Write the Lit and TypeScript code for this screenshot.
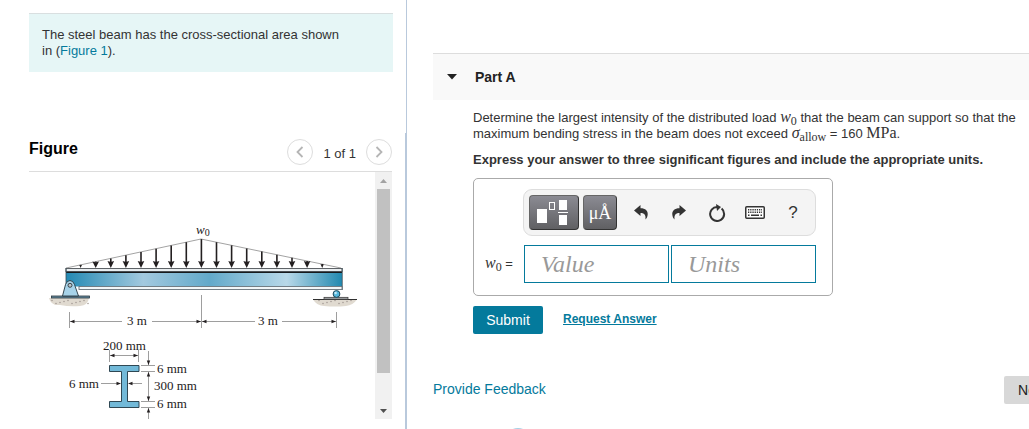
import { LitElement, html, svg, css } from "lit";
import { customElement } from "lit/decorators.js";

const BEAM_LEFT = 66;
const BEAM_MID = 201;
const BEAM_RIGHT = 341;
const LOAD_BASE = 268;
const LOAD_PEAK = 239;

@customElement("beam-figure")
class BeamFigure extends LitElement {
  static styles = css`
    :host { display: block; }
    .drawing { display: block; width: 346px; height: 247px; }
    .label { font: 13px "Liberation Serif", serif; fill: #1c1a1b; }
    .symbol { font-style: italic; }
    .small { font-size: 10px; font-style: normal; }
  `;

  loadTop(x: number) {
    return x <= BEAM_MID
      ? LOAD_BASE - ((x - BEAM_LEFT) / (BEAM_MID - BEAM_LEFT)) * (LOAD_BASE - LOAD_PEAK)
      : LOAD_BASE - ((BEAM_RIGHT - x) / (BEAM_RIGHT - BEAM_MID)) * (LOAD_BASE - LOAD_PEAK);
  }

  loadArrow(x: number) {
    const top = this.loadTop(x);
    const height = LOAD_BASE - top;
    const head = Math.min(7, height);
    const half = head > 5 ? 3.3 : head * 0.45;
    const tip = LOAD_BASE;
    return svg`
      <path d="M${x} ${top}V${tip - head + 1}" stroke="#231f20" stroke-width="1.6" />
      <path d="M${x - half} ${tip - head}Q${x} ${tip - head + 1.4} ${x + half} ${tip - head}L${x} ${tip}Z" fill="#231f20" />`;
  }

  arrowHead(x: number, y: number, angle: number) {
    return svg`<path d="M0 0L-4.5 -1.7V1.7Z" fill="#231f20" transform="translate(${x} ${y}) rotate(${angle})" />`;
  }

  ground(path: string, x: number, width: number) {
    const specks = Array.from({ length: Math.floor(width / 4) }, (_, i) => svg`
      <circle cx=${x + 3 + i * 4} cy=${300.5 + ((i * 3) % 4)} r="0.8" fill="#a59d98" />`);
    return svg`<path d=${path} fill="#e0dad0" />${specks}`;
  }

  render() {
    const arrows = Array.from({ length: 17 }, (_, i) => this.loadArrow(80.6 + i * 15.1));
    return html`
      <svg class="drawing" viewBox="29 172 346 247" role="img" aria-label="Simply supported steel beam with a triangular load and its I-shaped cross section">
        <defs>
          <linearGradient id="steel">
            <stop offset="0" stop-color="#2389b3" />
            <stop offset="0.28" stop-color="#a2c9df" />
            <stop offset="0.52" stop-color="#62a9ca" />
            <stop offset="0.8" stop-color="#b8d8e8" />
            <stop offset="1" stop-color="#2189b0" />
          </linearGradient>
        </defs>

        <path d="M66 268L201 239L341 268" fill="none" stroke="#8b8b8b" stroke-width="0.8" />
        ${arrows}

        <rect x="66" y="268.5" width="276" height="3" fill="#e9eef1" stroke="#5d6266" />
        <rect x="66" y="272" width="276" height="14.5" fill="url(#steel)" />
        <path d="M66 272.3H342" stroke="#161a1d" stroke-width="1.3" />
        <path d="M66 268V287M342.3 268V290" stroke="#394c56" stroke-width="0.8" />
        <rect x="79" y="286.5" width="263" height="3" fill="#f2f7f9" stroke="#67727a" stroke-width="0.9" />

        ${this.ground("M49 298H89Q88 305 80 306Q70 307 60 305Q51 306 49 298Z", 49, 40)}
        <rect x="51.5" y="296" width="38" height="2" fill="#668da0" stroke="#29363d" stroke-width="0.8" />
        <path d="M62.5 296L65.5 284.5Q67 280.5 70 280.5Q73 280.5 74.5 284.5L78.5 296Z" fill="#a7d3e9" stroke="#26373f" stroke-width="0.9" />
        <circle cx="70" cy="285.3" r="2" fill="#bcc5ca" stroke="#2b3439" stroke-width="0.9" />

        ${this.ground("M313 299.5H357Q353 305 346 306Q335 307 324 306Q317 306 313 299.5Z", 316, 38)}
        <path d="M313 299.5H357" stroke="#303030" stroke-width="1" />
        <rect x="324" y="297.3" width="24" height="2" fill="#9c9fa1" stroke="#333" stroke-width="0.7" />
        <circle cx="336.5" cy="294" r="3.4" fill="#55b7dc" stroke="#1d4555" />
        <circle cx="335.6" cy="293" r="1.2" fill="#c8ebf7" />

        <path d="M69.5 312V328M201.5 295V328M336.5 312V328M70 321.5H122M152 321.5H201M202 321.5H255M282 321.5H336" stroke="#858585" stroke-width="0.8" />
        ${this.arrowHead(70, 321.5, 180)}${this.arrowHead(201, 321.5, 0)}
        ${this.arrowHead(202, 321.5, 180)}${this.arrowHead(336, 321.5, 0)}
        <text class="label symbol" x="196" y="234">w<tspan class="small" dy="2">0</tspan></text>
        <text class="label" x="127" y="325">3 m</text>
        <text class="label" x="258" y="325">3 m</text>

        <path d="M109.5 365.5H139V371.5H127.5V401.5H139V407.5H109.5V401.5H121.5V371.5H109.5Z" fill="#72b9d8" stroke="#1f3743" stroke-width="0.9" />
        <path d="M109.5 350V362M138.5 350V362M110 355.5H138M141 365.5H155M141 371.5H155M141 401.5H155M141 407.5H155M101 383.5H120M129 383.5H142M148.5 351V365M148.5 372V401M148.5 408V419" stroke="#858585" stroke-width="0.8" />
        ${this.arrowHead(110, 355.5, 180)}${this.arrowHead(138, 355.5, 0)}
        ${this.arrowHead(121, 383.5, 0)}${this.arrowHead(128, 383.5, 180)}
        ${this.arrowHead(148.5, 365, 90)}${this.arrowHead(148.5, 372, -90)}
        ${this.arrowHead(148.5, 401, 90)}${this.arrowHead(148.5, 408, -90)}
        <text class="label" x="103" y="350">200 mm</text>
        <text class="label" x="157" y="373">6 mm</text>
        <text class="label" x="154" y="390">300 mm</text>
        <text class="label" x="157" y="408">6 mm</text>
        <text class="label" x="69" y="388">6 mm</text>
      </svg>`;
  }
}

@customElement("app-root")
class AppRoot extends LitElement {
  static styles = css`
    :host {
      display: block;
      font: 13px/16px "Liberation Sans", Arial, sans-serif;
      color: #333;
      background: #fff;
    }
    *, *::before { box-sizing: border-box; }
    button { font: inherit; cursor: pointer; margin: 0; padding: 0; border: 0; background: none; }
    h2, p { margin: 0; }
    a { color: #047a9c; text-decoration: none; }

    .page { display: grid; grid-template-columns: 407px minmax(0, 1fr); height: 100vh; overflow: hidden; }
    .left { display: flex; flex-direction: column; }
    .intro { height: 133px; padding: 13px 13px 0 29px; border-right: 1px solid #b9c9dc; }
    .problem { padding: 13px 48px 13px 13px; border-top: 1px solid #d9dfe0; background: #e6f6f6; }
    .figure { flex: 1; padding: 6px 13px 0 29px; border-right: 2px solid #b9c9dc; }
    .figure-head { display: flex; align-items: center; justify-content: space-between; height: 33px; padding-bottom: 7px; border-bottom: 1px solid #ddd; }
    .figure-title { font-size: 16px; line-height: 18px; color: #000; padding-bottom: 6px; }
    .pager { display: flex; align-items: center; gap: 10px; }
    .pager-text { padding-top: 4px; }
    .round { display: grid; place-items: center; width: 26px; height: 26px; border: 1px solid #ddd; border-radius: 50%; }
    .viewer { display: flex; justify-content: space-between; height: 247px; overflow: hidden; }
    .scrollbar { display: flex; flex-direction: column; align-items: center; justify-content: space-between; width: 17px; background: #f1f1f1; }
    .scroll-arrow { display: grid; place-items: center; width: 17px; height: 17px; }
    .thumb { width: 13px; flex: 1; margin-bottom: 29px; background: #c1c1c1; }

    .right { padding: 53px 0 0 26px; min-width: 0; }
    .part-head { display: flex; align-items: center; gap: 18px; width: 100%; height: 47px; padding-left: 14px; border-top: 1px solid #ddd; background: #f9f9f9; }
    .part-title { font-size: 14px; color: #222; }
    .part-body { padding: 10px 0 0 40px; }
    .instruction { padding-top: 10px; font-weight: bold; }
    .math { font-family: "Liberation Serif", serif; font-size: 16px; line-height: 12px; }
    .math i { font-style: italic; }
    .sub { font-size: 12px; position: relative; top: 3px; }
    .answer { width: 360px; margin-top: 10px; padding: 10px 16px 12px 11px; border: 1px solid #aaa; border-radius: 5px; }
    .toolbar { display: flex; align-items: center; height: 47px; margin-left: 38px; padding: 0 5px; border: 1px solid #ddd; border-radius: 9px; background: #f4f4f4; }
    .dark { display: grid; place-items: center; height: 35px; border: 1px solid #333; border-top-color: #666; border-left-color: #666; border-radius: 4px; background: linear-gradient(#8b8b93, #606063); color: #fff; }
    .templates { width: 50px; }
    .symbols { width: 34px; margin-left: 4px; font: 18px/20px "Liberation Serif", serif; }
    .tools { display: flex; flex: 1; justify-content: space-between; padding: 0 5px 0 12px; }
    .tool { display: grid; place-items: center; width: 24px; height: 28px; color: #333; font-size: 17px; }
    .fields { display: flex; align-items: center; gap: 2px; margin-top: 9px; }
    .field-label { width: 37px; white-space: nowrap; }
    .field { flex: 1; min-width: 0; height: 38px; padding: 0 16px; border: 1px solid #047a9c; border-radius: 0; background: #fff; font: italic 24px "Liberation Serif", serif; }
    .field::placeholder { color: #999; opacity: 1; }
    .actions { display: flex; align-items: center; gap: 20px; margin-top: 10px; }
    .submit { width: 70px; height: 28px; border-radius: 2px; background: #047a9c; color: #fff; font-size: 14px; }
    .request { font-size: 12px; font-weight: bold; text-decoration: underline; padding-bottom: 2px; }
    .footer { display: flex; align-items: center; justify-content: space-between; width: calc(100% + 32px); margin-top: 42px; font-size: 14px; }
    .feedback { padding-bottom: 2px; }
    .next { width: 57px; height: 28px; border-radius: 2px; background: #d8d8d8; color: #222; }
    .badge { width: 26px; height: 26px; margin: 24px 0 0 72px; border: 2px solid #a6d0e6; border-radius: 50%; }
  `;

  render() {
    return html`
      <main class="page">
        <section class="left">
          <div class="intro">
            <p class="problem">The steel beam has the cross-sectional area shown in (<a href="#figure">Figure 1</a>).</p>
          </div>
          <div class="figure" id="figure">
            <div class="figure-head">
              <h2 class="figure-title">Figure</h2>
              <div class="pager">
                <button class="round" aria-label="Previous figure">
                  <svg width="8" height="12" viewBox="0 0 8 12"><path d="M6.5 1L1.5 6L6.5 11" fill="none" stroke="#b5b5b5" stroke-width="1.8" /></svg>
                </button>
                <span class="pager-text">1 of 1</span>
                <button class="round" aria-label="Next figure">
                  <svg width="8" height="12" viewBox="0 0 8 12"><path d="M1.5 1L6.5 6L1.5 11" fill="none" stroke="#b5b5b5" stroke-width="1.8" /></svg>
                </button>
              </div>
            </div>
            <div class="viewer">
              <beam-figure></beam-figure>
              <div class="scrollbar">
                <button class="scroll-arrow" aria-label="Scroll up">
                  <svg width="7" height="4" viewBox="0 0 7 4"><path d="M0 4L3.5 0L7 4Z" fill="#a3a3a3" /></svg>
                </button>
                <div class="thumb"></div>
                <button class="scroll-arrow" aria-label="Scroll down">
                  <svg width="7" height="4" viewBox="0 0 7 4"><path d="M0 0H7L3.5 4Z" fill="#505050" /></svg>
                </button>
              </div>
            </div>
          </div>
        </section>

        <section class="right">
          <button class="part-head">
            <svg width="10" height="6" viewBox="0 0 10 6"><path d="M0 0H10L5 5.5Z" fill="#222" /></svg>
            <b class="part-title">Part A</b>
          </button>
          <div class="part-body">
            <p>Determine the largest intensity of the distributed load <span class="math"><i>w</i><span class="sub">0</span></span> that the beam can support so that the maximum bending stress in the beam does not exceed <span class="math"><i>σ</i><span class="sub">allow</span></span> = 160 <span class="math">MPa</span>.</p>
            <p class="instruction">Express your answer to three significant figures and include the appropriate units.</p>
            <div class="answer">
              <div class="toolbar">
                <button class="dark templates" aria-label="Templates">
                  <svg width="34" height="25" viewBox="0 0 34 25">
                    <path d="M0 9H10V23H0ZM22 0H30V10H22ZM22 15H30V25H22Z" fill="#fff" />
                    <path d="M21 12.5H31" stroke="#fff" />
                    <rect x="12.5" y="2.5" width="5" height="7" fill="none" stroke="#fff" />
                  </svg>
                </button>
                <button class="dark symbols" aria-label="Units and symbols">μÅ</button>
                <div class="tools">
                  <button class="tool" aria-label="Undo">
                    <svg width="14" height="15" viewBox="0 0 14 15"><path d="M0 5.5L6.5 0V3.3C11.5 3.3 14 6 13.7 9.5C13.5 11.8 12.8 13.2 11.4 14.6C12 10.5 10.8 8 6.5 8V11Z" fill="#333" /></svg>
                  </button>
                  <button class="tool" aria-label="Redo">
                    <svg width="14" height="15" viewBox="0 0 14 15"><path d="M14 5.5L7.5 0V3.3C2.5 3.3 0 6 .3 9.5C.5 11.8 1.2 13.2 2.6 14.6C2 10.5 3.2 8 7.5 8V11Z" fill="#333" /></svg>
                  </button>
                  <button class="tool" aria-label="Reset">
                    <svg width="17" height="18" viewBox="0 0 17 18"><path d="M12.6 4.6A7 7 0 1 1 8.5 3" fill="none" stroke="#333" stroke-width="2" /><path d="M7 0L12 3L8 7Z" fill="#333" /></svg>
                  </button>
                  <button class="tool" aria-label="Keyboard">
                    <svg width="20" height="13" viewBox="0 0 20 13"><rect x=".75" y=".75" width="18.5" height="11.5" rx="1" fill="#fff" stroke="#333" stroke-width="1.5" /><path d="M3 3.7H17M3 6.3H17" stroke="#333" stroke-width="1.5" stroke-dasharray="1.3 .9" /><path d="M3 9.3H4.5M6 9.3H14M15.5 9.3H17" stroke="#333" stroke-width="1.4" /></svg>
                  </button>
                  <button class="tool" aria-label="Help">?</button>
                </div>
              </div>
              <div class="fields">
                <label class="field-label" for="value"><span class="math"><i>w</i><span class="sub">0</span></span> =</label>
                <input class="field" id="value" placeholder="Value" />
                <input class="field" aria-label="Units" placeholder="Units" />
              </div>
            </div>
            <div class="actions">
              <button class="submit">Submit</button>
              <a class="request" href="#request">Request Answer</a>
            </div>
          </div>
          <div class="footer">
            <a class="feedback" href="#feedback">Provide Feedback</a>
            <button class="next">Next</button>
          </div>
          <div class="badge"></div>
        </section>
      </main>`;
  }
}
